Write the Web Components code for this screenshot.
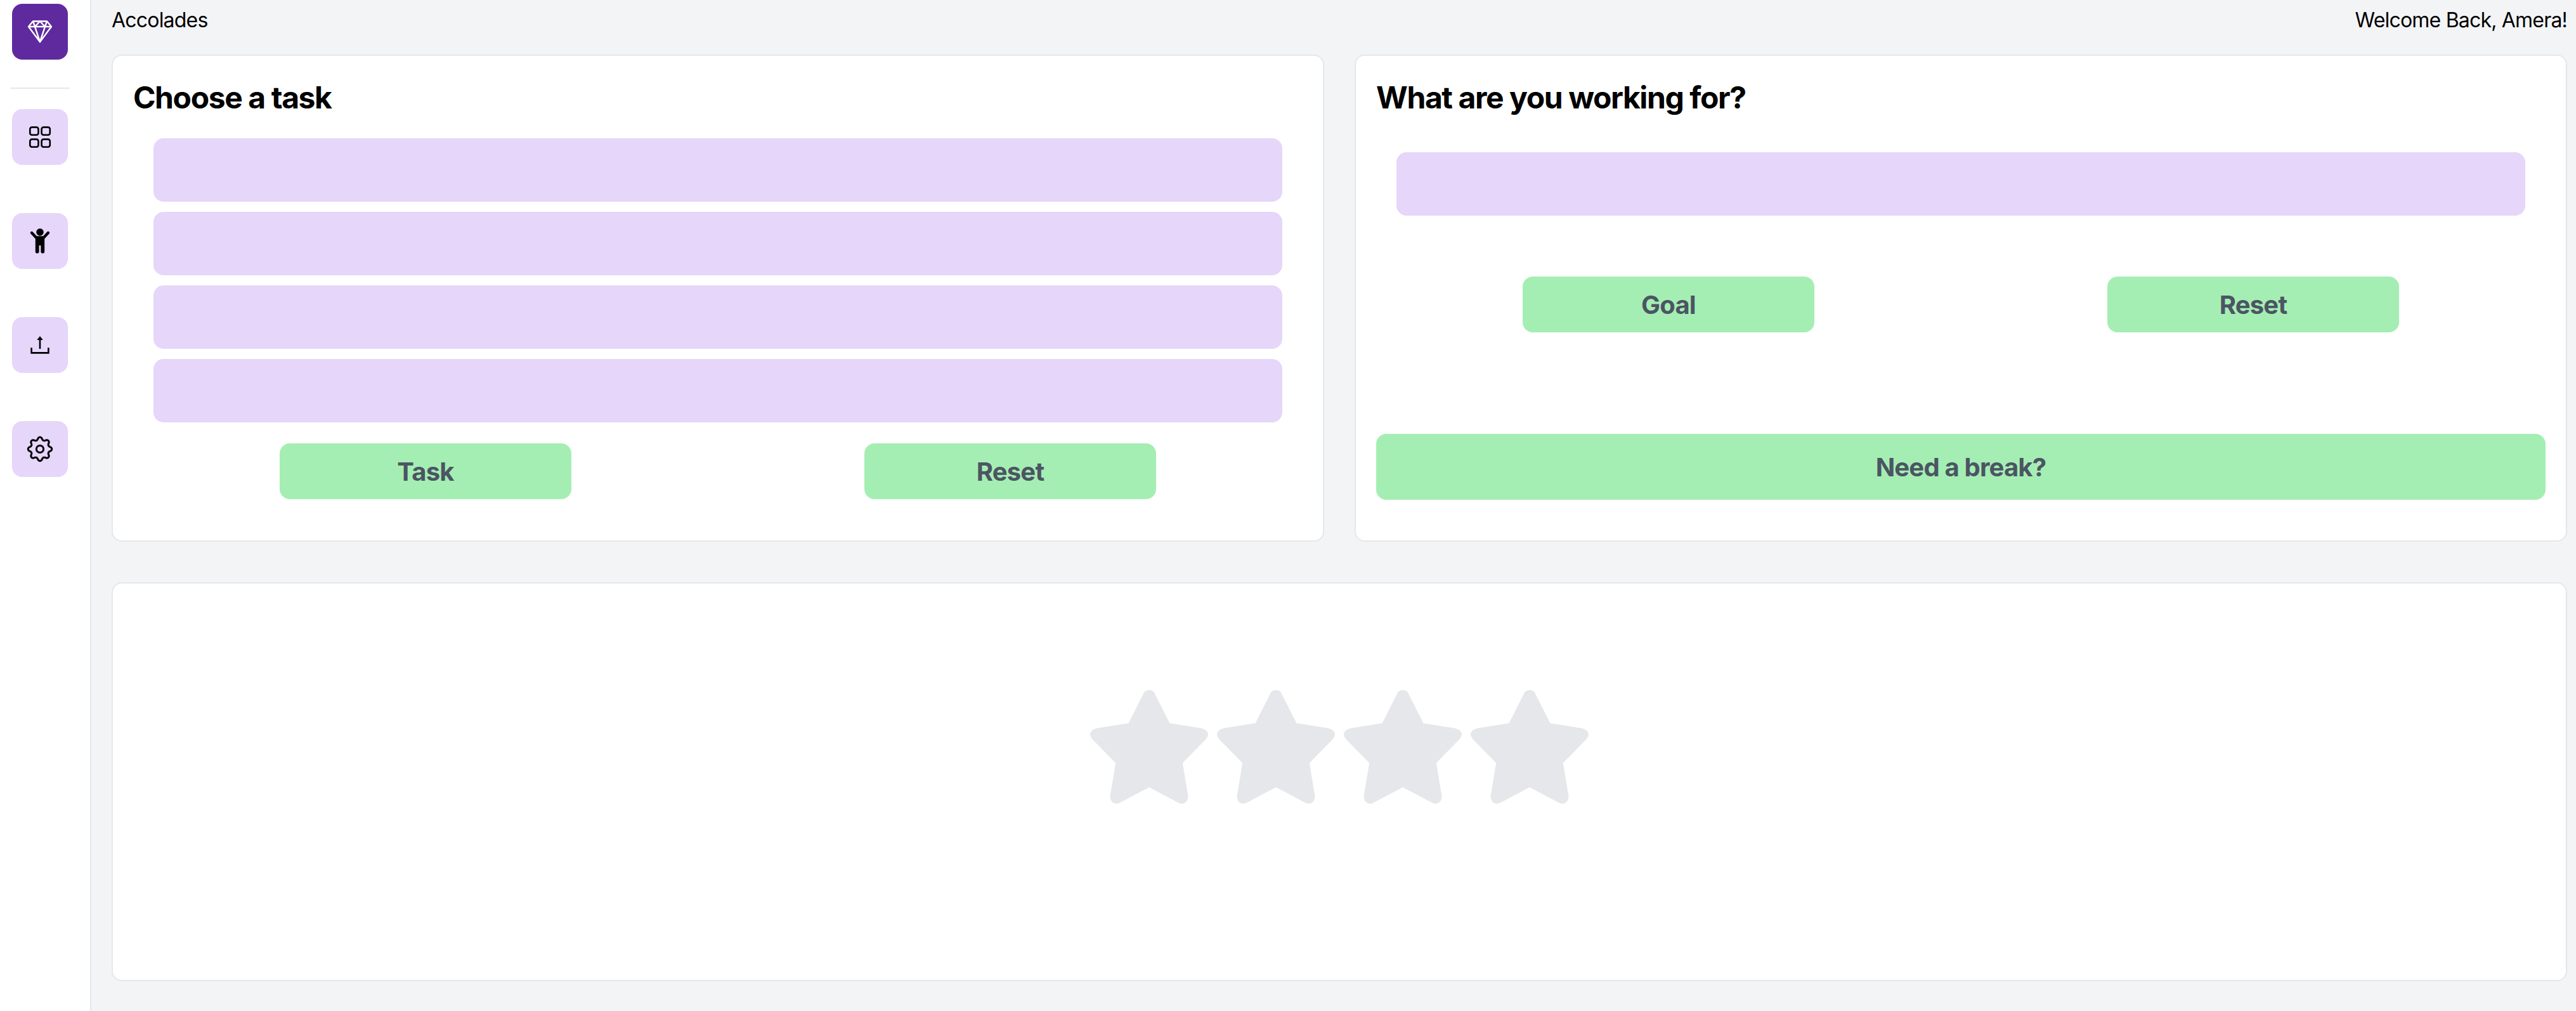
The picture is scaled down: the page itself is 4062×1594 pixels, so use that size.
<!DOCTYPE html>
<html lang="en">
<head>
<meta charset="utf-8">
<title>Accolades</title>
<style>
  html, body { margin: 0; height: 100%; }
  body { background: #f3f4f6; font-family: Inter, "Liberation Sans", sans-serif; color: #000; }
</style>
</head>
<body>
<app-shell>
  <side-nav slot="nav">
    <nav-icon name="diamond" brand></nav-icon>
    <nav-icon name="grid"></nav-icon>
    <nav-icon name="person"></nav-icon>
    <nav-icon name="upload"></nav-icon>
    <nav-icon name="gear"></nav-icon>
  </side-nav>
  <top-bar>
    <span>Accolades</span>
    <span slot="end">Welcome Back, Amera!</span>
  </top-bar>
  <div class="panels" slot="panels">
    <task-panel></task-panel>
    <goal-panel></goal-panel>
  </div>
  <star-panel slot="stars" count="4"></star-panel>
</app-shell>

<script>
(function () {
  // gear outline: wavy circle, 8 teeth
  function gearPath() {
    const pts = [];
    for (let i = 0; i < 240; i++) {
      const a = (i / 240) * Math.PI * 2;
      const wave = Math.cos(a * 8);
      const r = 16.6 + 2.1 * Math.sign(wave) * Math.pow(Math.abs(wave), 0.75);
      pts.push((28 + r * Math.sin(a)).toFixed(2) + " " + (28 - r * Math.cos(a)).toFixed(2));
    }
    return "M" + pts.join("L") + "Z";
  }

  const ICONS = {
    diamond: `<g fill="none" stroke="#fff" stroke-width="2.4" stroke-linejoin="round">
        <path d="M17 11.500H39L46 20 28 44 10 20Z"/>
        <path d="M10 20H46M17 11.500 20 20 28 11.500 36 20 39 11.500M20 20 28 44 36 20"/>
      </g>`,
    grid: `<g fill="none" stroke="#000" stroke-width="2.6">
        <rect x="12.300" y="12.600" width="13.200" height="12.200" rx="3"/>
        <rect x="30.600" y="12.600" width="13.200" height="12.200" rx="3"/>
        <rect x="12.300" y="31.600" width="13.200" height="12.200" rx="3"/>
        <rect x="30.600" y="31.600" width="13.200" height="12.200" rx="3"/>
      </g>`,
    person: `<g transform="translate(0 -2)">
        <circle cx="28" cy="16" r="5.800"/>
        <path d="M15 17 22 24.500H34L41 17" fill="none" stroke="#000" stroke-width="4.400" stroke-linecap="round" stroke-linejoin="round"/>
        <path d="M20.800 24H35.200V46.500a2.900 2.900 0 0 1-5.800 0V37H26.600V46.500a2.900 2.900 0 0 1-5.800 0Z"/>
      </g>`,
    upload: `<path d="M28 18V34" fill="none" stroke="#000" stroke-width="2.600"/>
      <path d="M28 14 32.800 20H23.200Z"/>
      <path d="M14.600 32.300V40.400H41.400V32.300" fill="none" stroke="#000" stroke-width="2.600"/>`,
    gear: `<path d="${gearPath()}" fill="none" stroke="#000" stroke-width="3" stroke-linejoin="round"/>
      <circle cx="28" cy="28" r="5.600" fill="none" stroke="#000" stroke-width="3"/>`
  };

  class AppShell extends HTMLElement {
    constructor() {
      super();
      this.attachShadow({ mode: "open" });
      this.shadowRoot.innerHTML = `
        <style>
          :host { display: flex; min-height: 1594px; }
          main { flex: 1; min-width: 0; padding: 0 14px 0 32px; }
          .gap { height: 64px; }
        </style>
        <slot name="nav"></slot>
        <main>
          <slot></slot>
          <slot name="panels"></slot>
          <div class="gap"></div>
          <slot name="stars"></slot>
        </main>
      `;
    }
  }

  class SideNav extends HTMLElement {
    constructor() {
      super();
      this.attachShadow({ mode: "open" });
      this.shadowRoot.innerHTML = `
        <style>
          :host {
            display: flex;
            flex-direction: column;
            align-items: center;
            flex: none;
            box-sizing: border-box;
            width: 144px;
            padding: 6px 32px 0 16px;
            background: #fff;
            border-right: 2px solid #e5e7eb;
          }
          hr { width: 100%; height: 2px; margin: 44px 0 32px; border: 0; background: #e5e7eb; }
          .items { display: flex; flex-direction: column; gap: 76px; }
        </style>
        <slot name="brand"></slot>
        <hr>
        <div class="items"><slot></slot></div>
      `;
    }
    connectedCallback() {
      const brand = this.querySelector("nav-icon[brand]");
      if (brand) brand.slot = "brand";
    }
  }

  class NavIcon extends HTMLElement {
    constructor() {
      super();
      this.attachShadow({ mode: "open" });
    }
    connectedCallback() {
      const brand = this.hasAttribute("brand");
      this.shadowRoot.innerHTML = `
        <style>
          :host {
            display: flex;
            align-items: center;
            justify-content: center;
            width: 88px;
            height: 88px;
            border-radius: 16px;
            background: ${brand ? "#5f2a9e" : "#e5d6fa"};
          }
          svg { display: block; width: 56px; height: 56px; }
        </style>
        <svg viewBox="0 0 56 56">${ICONS[this.getAttribute("name")] || ""}</svg>
      `;
    }
  }

  class TopBar extends HTMLElement {
    constructor() {
      super();
      this.attachShadow({ mode: "open" });
      this.shadowRoot.innerHTML = `
        <style>
          :host {
            display: flex;
            justify-content: space-between;
            box-sizing: border-box;
            height: 86px;
            padding-top: 8px;
            font-size: 32px;
            line-height: 48px;
            letter-spacing: -0.8px;
          }
        </style>
        <slot></slot>
        <slot name="end"></slot>
      `;
    }
  }

  class PanelCard extends HTMLElement {
    constructor() {
      super();
      this.attachShadow({ mode: "open" });
      this.shadowRoot.innerHTML = `
        <style>
          :host {
            display: block;
            box-sizing: border-box;
            padding: 34px 32px 64px;
            background: #fff;
            border: 2px solid #e5e7eb;
            border-radius: 16px;
          }
          h2 { margin: 0 0 -2px; font-size: 48px; line-height: 64px; font-weight: 700; letter-spacing: -1.4px; }
        </style>
        <h2><slot name="title"></slot></h2>
        <slot></slot>
      `;
    }
  }

  class SoftRow extends HTMLElement {
    constructor() {
      super();
      this.attachShadow({ mode: "open" });
      this.shadowRoot.innerHTML = `
        <style>
          :host { display: block; height: 100px; border-radius: 16px; background: #e5d6fa; }
        </style>
      `;
    }
  }

  class ActionButton extends HTMLElement {
    constructor() {
      super();
      this.attachShadow({ mode: "open" });
      this.shadowRoot.innerHTML = `
        <style>
          :host {
            display: flex;
            align-items: center;
            justify-content: center;
            box-sizing: border-box;
            width: 460px;
            height: 88px;
            border-radius: 16px;
            background: #a5eeb3;
            color: #4b5563;
            font-size: 40px;
            font-weight: 700;
            letter-spacing: -0.8px;
          }
          :host([wide]) { width: 100%; height: 104px; }
        </style>
        <slot></slot>
      `;
    }
  }

  class TaskPanel extends HTMLElement {
    constructor() {
      super();
      this.attachShadow({ mode: "open" });
      this.shadowRoot.innerHTML = `
        <style>
          :host { display: grid; }
          .rows { display: flex; flex-direction: column; gap: 16px; margin-top: 34px; padding: 0 32px; }
          .actions { display: flex; justify-content: space-around; margin-top: 33px; }
        </style>
        <panel-card>
          <span slot="title">Choose a task</span>
          <div class="rows">
            <soft-row></soft-row>
            <soft-row></soft-row>
            <soft-row></soft-row>
            <soft-row></soft-row>
          </div>
          <div class="actions">
            <action-button>Task</action-button>
            <action-button>Reset</action-button>
          </div>
        </panel-card>
      `;
    }
  }

  class GoalPanel extends HTMLElement {
    constructor() {
      super();
      this.attachShadow({ mode: "open" });
      this.shadowRoot.innerHTML = `
        <style>
          :host { display: grid; }
          .field { margin-top: 56px; padding: 0 32px; }
          .actions { display: flex; justify-content: space-around; margin-top: 96px; }
          .rest { margin-top: 160px; }
        </style>
        <panel-card>
          <span slot="title">What are you working for?</span>
          <div class="field"><soft-row></soft-row></div>
          <div class="actions">
            <action-button>Goal</action-button>
            <action-button>Reset</action-button>
          </div>
          <div class="rest"><action-button wide>Need a break?</action-button></div>
        </panel-card>
      `;
    }
  }

  class StarPanel extends HTMLElement {
    constructor() {
      super();
      this.attachShadow({ mode: "open" });
    }
    connectedCallback() {
      const n = Number(this.getAttribute("count")) || 0;
      const star = `<svg viewBox="-93 0 186 179"><path d="M0 0C5 0 8.500 3 9.500 7L32.500 52.300 81.500 60C88 61.500 93 65 93 70 93 73 91 75 89 78L52.800 115 61.400 166.700C62 173 58 179 52 179 49 179 47 178.500 44.500 176.700L0 153.300-44.500 176.700C-47 178.500-49 179-52 179-58 179-62 173-61.400 166.700L-52.800 115-89 78C-91 75-93 73-93 70-93 65-88 61.500-81.500 60L-32.500 52.300-9.500 7C-8.500 3-5 0 0 0Z"/></svg>`;
      this.shadowRoot.innerHTML = `
        <style>
          :host {
            display: flex;
            justify-content: center;
            align-items: flex-start;
            gap: 14px;
            box-sizing: border-box;
            height: 629px;
            padding-top: 168px;
            background: #fff;
            border: 2px solid #e5e7eb;
            border-radius: 16px;
          }
          svg { display: block; width: 186px; height: 179px; fill: #e5e7eb; }
        </style>
        ${star.repeat(n)}
      `;
    }
  }

  customElements.define("app-shell", AppShell);
  customElements.define("side-nav", SideNav);
  customElements.define("nav-icon", NavIcon);
  customElements.define("top-bar", TopBar);
  customElements.define("panel-card", PanelCard);
  customElements.define("soft-row", SoftRow);
  customElements.define("action-button", ActionButton);
  customElements.define("task-panel", TaskPanel);
  customElements.define("goal-panel", GoalPanel);
  customElements.define("star-panel", StarPanel);

  // the two top cards share one grid row
  const panels = document.querySelector(".panels");
  panels.style.display = "grid";
  panels.style.gridTemplateColumns = "1fr 1fr";
  panels.style.gap = "48px";
})();
</script>
</body>
</html>
